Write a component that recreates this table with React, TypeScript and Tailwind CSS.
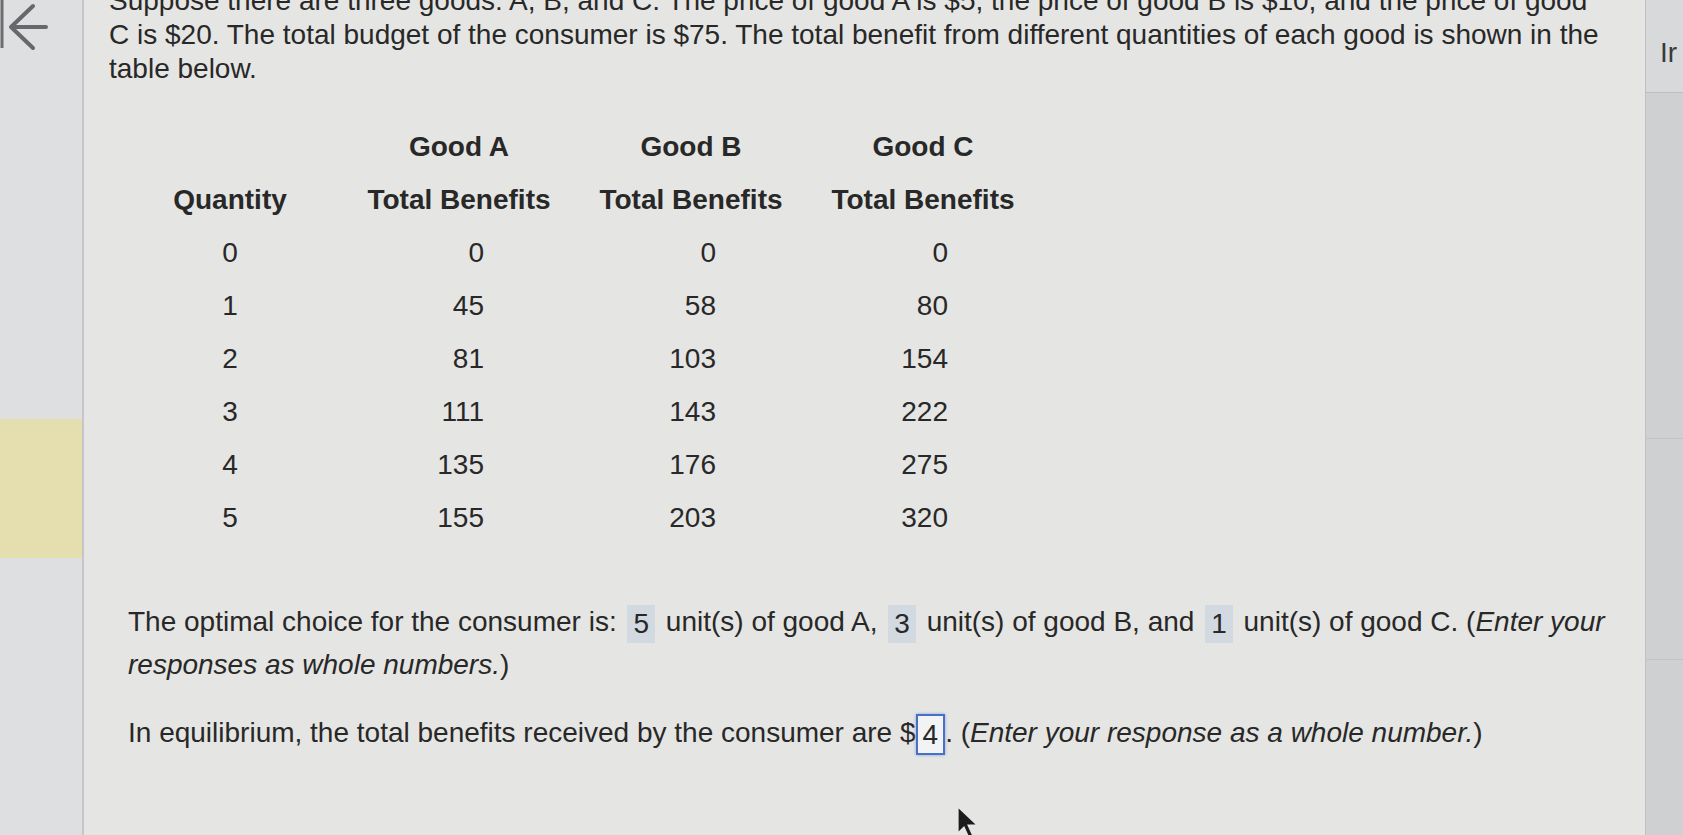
import React from 'react'

const font = { fontFamily: '"Liberation Sans", Arial, sans-serif' }

const rows = [
  [0, 0, 0, 0],
  [1, 45, 58, 80],
  [2, 81, 103, 154],
  [3, 111, 143, 222],
  [4, 135, 176, 275],
  [5, 155, 203, 320],
]

function AnswerBox({ value }: { value: string }) {
  return (
    <span className="mx-[3px] inline-block h-[38px] bg-[#d3d9e0] px-[6px] align-middle leading-[38px]">
      {value}
    </span>
  )
}

function BackArrow() {
  return (
    <svg width="52" height="54" viewBox="0 0 52 54" fill="none">
      <path d="M2 0 L2 48" stroke="#6b6d70" strokeWidth="3" />
      <path d="M46 27 H11 M33 6 L11 27 L33 48" stroke="#66686b" strokeWidth="4" strokeLinecap="round" strokeLinejoin="round" />
    </svg>
  )
}

function Cursor() {
  return (
    <svg width="26" height="34" viewBox="0 0 26 34" className="absolute left-[956px] top-[806px]">
      <path d="M2 1 L2 27 L8 21 L13 32 L17 30 L12 19 L21 19 Z" fill="#1c1c1c" stroke="#e8e8e8" strokeWidth="1.2" />
    </svg>
  )
}

export default function App() {
  return (
    <div className="relative flex h-[835px] w-[1683px] overflow-hidden bg-[#e5e5e3] text-[#282828]" style={font}>
      {/* left rail */}
      <div className="flex w-[84px] shrink-0 flex-col border-r-2 border-[#c4c6c9] bg-[#dedfe0]">
        <div className="pt-0">
          <BackArrow />
        </div>
        <div className="mt-[365px] h-[139px] w-full bg-[#e5deae]" />
      </div>

      {/* question */}
      <div className="flex-1 pl-[25px]">
        <p className="-mt-[16px] whitespace-nowrap text-[28px] leading-[34px]">
          Suppose there are three goods: A, B, and C. The price of good A is $5, the price of good B is $10, and the price of good
          <br />
          C is $20. The total budget of the consumer is $75. The total benefit from different quantities of each good is shown in the
          <br />
          table below.
        </p>

        <div className="ml-[63px] mt-[34px] grid grid-cols-[147px_184px_184px_184px] gap-x-[48px] text-[28px]">
          <div className="h-[53px]" />
          {['Good A', 'Good B', 'Good C'].map((g) => (
            <div key={g} className="flex h-[53px] items-center justify-center font-bold">{g}</div>
          ))}
          <div className="flex h-[53px] w-[116px] items-center justify-center font-bold">Quantity</div>
          {[0, 1, 2].map((i) => (
            <div key={i} className="flex h-[53px] items-center justify-center font-bold whitespace-nowrap">Total Benefits</div>
          ))}
          {rows.map((r) => (
            <React.Fragment key={r[0]}>
              <div className="flex h-[53px] w-[116px] items-center justify-center">{r[0]}</div>
              <div className="flex h-[53px] items-center justify-end pr-[67px]">{r[1]}</div>
              <div className="flex h-[53px] items-center justify-end pr-[67px]">{r[2]}</div>
              <div className="flex h-[53px] items-center justify-end pr-[67px]">{r[3]}</div>
            </React.Fragment>
          ))}
        </div>

        <div className="ml-[19px] mt-[56px] whitespace-nowrap text-[28px] leading-[43px]">
          <p>
            The optimal choice for the consumer is: <AnswerBox value="5" /> unit(s) of good A, <AnswerBox value="3" /> unit(s) of good B, and{' '}
            <AnswerBox value="1" /> unit(s) of good C. (<i>Enter your</i>
            <br />
            <i>responses as whole numbers.</i>)
          </p>
          <p className="mt-[25px]">
            In equilibrium, the total benefits received by the consumer are $
            <span className="inline-block h-[41px] border-2 border-[#4a70c6] bg-[#f2f3f5] px-[5px] align-middle leading-[37px] shadow-[0_0_3px_#8aa3e0]">4</span>
            . (<i>Enter your response as a whole number.</i>)
          </p>
        </div>
      </div>

      {/* right rail */}
      <div className="flex w-[38px] shrink-0 flex-col border-l border-[#bfc1c4] bg-[#cfd0d2]">
        <div className="h-[93px] border-b border-[#bcbec1] bg-[#d8d9db] pl-[14px] pt-[36px] text-[28px] leading-[34px] text-[#3a3a3a]">
          Ir
        </div>
        <div className="h-[346px] border-b border-[#c2c4c7]" />
        <div className="h-[221px] border-b border-[#c2c4c7]" />
      </div>

      <Cursor />
    </div>
  )
}
